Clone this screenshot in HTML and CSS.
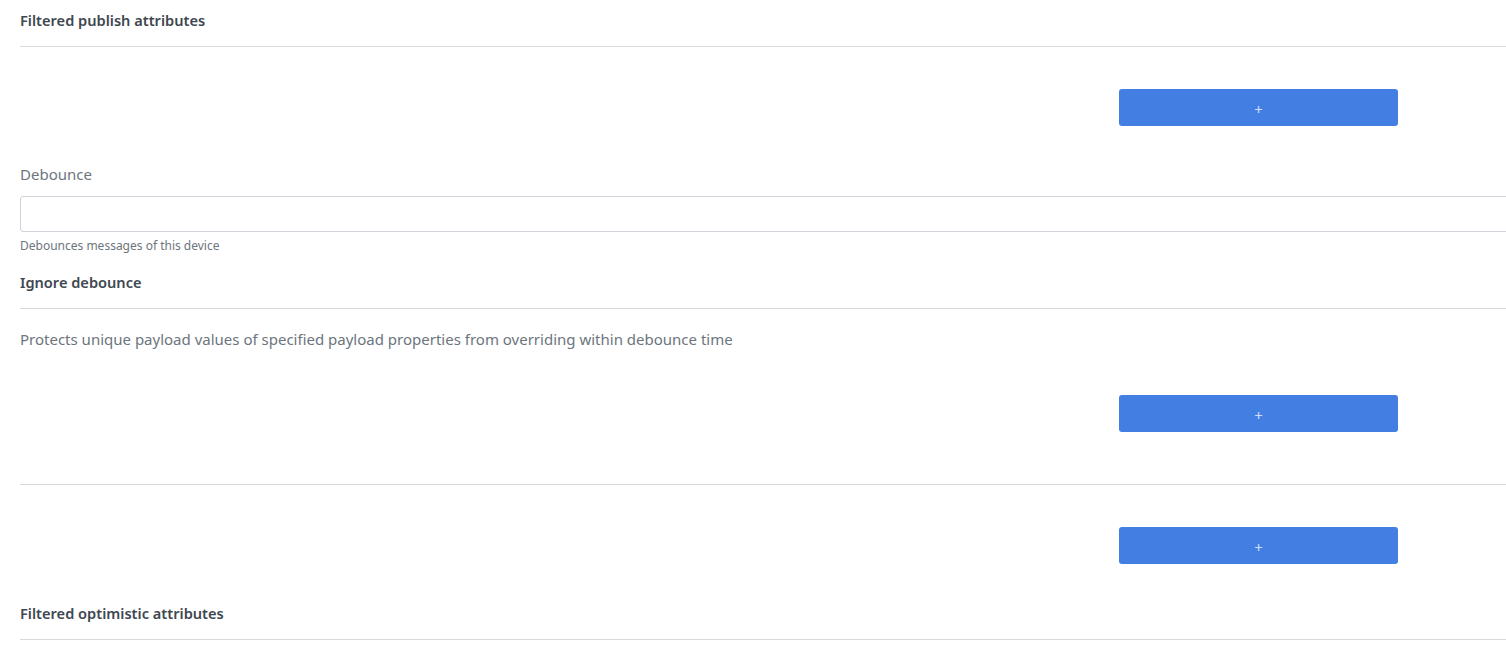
FILE: index.html
```html
<!DOCTYPE html>
<html>
<head>
<meta charset="utf-8">
<link rel="stylesheet" href="styles.css">
</head>
<body>
<form class="form">
  <div class="legend legend-first">Filtered publish attributes</div>
  <div class="add-row add-row-1"><button type="button" class="btn-add">+</button></div>

  <div class="field">
    <label class="label">Debounce</label>
    <input class="input" type="text">
    <div class="hint">Debounces messages of this device</div>
  </div>

  <div class="legend legend-ignore">Ignore debounce</div>
  <p class="desc">Protects unique payload values of specified payload properties from overriding within debounce time</p>
  <div class="add-row add-row-2"><button type="button" class="btn-add">+</button></div>

  <hr class="sep">
  <div class="add-row add-row-3"><button type="button" class="btn-add">+</button></div>

  <div class="legend legend-last">Filtered optimistic attributes</div>
</form>
</body>
</html>
```

FILE: styles.css
```css
html, body {
  margin: 0;
  padding: 0;
  background: #ffffff;
  overflow: hidden;
}
body {
  font-family: "Noto Sans", "Open Sans", sans-serif;
  color: #495057;
}
.form {
  width: 1500px;
  padding-left: 20px;
  display: flex;
  flex-direction: column;
}
.legend {
  font-size: 14.6px;
  font-weight: 600;
  line-height: 22px;
  color: #3e4750;
  padding-bottom: 15px;
  border-bottom: 1px solid #d7d9db;
}
.legend-first { margin-top: 9px; }
.legend-ignore { margin-top: 17px; }
.legend-last { margin-top: 38px; }
.add-row {
  display: flex;
  padding-left: 1099px;
}
.add-row-1 { margin-top: 42px; }
.add-row-2 { margin-top: 45px; }
.add-row-3 { margin-top: 42px; }
.btn-add {
  width: 279px;
  height: 37px;
  border: none;
  border-radius: 3px;
  background: #437ee3;
  color: #d0defa;
  font-family: "Noto Sans", sans-serif;
  font-size: 15px;
  line-height: 1;
  padding: 3px 0 0;
}
.field {
  display: flex;
  flex-direction: column;
  margin-top: 37px;
}
.label {
  font-size: 15px;
  line-height: 22px;
  color: #6c757d;
}
.input {
  margin-top: 11px;
  height: 36px;
  box-sizing: border-box;
  border: 1px solid #ced4da;
  border-radius: 3px;
  padding: 0 10px;
  font-size: 15px;
}
.hint {
  margin-top: 6px;
  font-size: 12px;
  line-height: 16px;
  color: #6c757d;
}
.desc {
  margin: 19px 0 0;
  font-size: 15px;
  line-height: 22px;
  color: #6c757d;
}
.sep {
  margin: 52px 0 0;
  border: none;
  border-top: 1px solid #d7d9db;
  height: 0;
}
```
